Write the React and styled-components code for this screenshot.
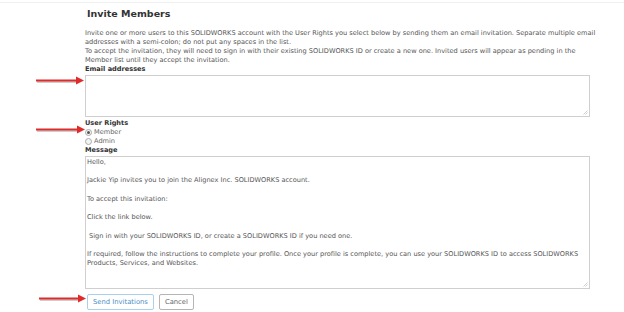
import React from "react";
import styled, { createGlobalStyle } from "styled-components";

const Global = createGlobalStyle`
  html, body {
    margin: 0;
    padding: 0;
    background: #fff;
  }
  body {
    font-family: "DejaVu Sans", Verdana, sans-serif;
    color: #555;
  }
`;

const Page = styled.div`
  position: relative;
  width: 624px;
  height: 312px;
  overflow: hidden;
  border-top: 1px solid #f0f0f0;
  margin-top: 2px;
  box-sizing: border-box;
`;

const Panel = styled.div`
  padding-left: 85px;
  width: 505px;
  display: flex;
  flex-direction: column;
`;

const Title = styled.h2`
  margin: 5px 0 0 2px;
  font-size: 9.5px;
  line-height: 12px;
  font-weight: bold;
  color: #333;
`;

const Intro = styled.p`
  margin: 9px 0 0 0;
  font-size: 6.6px;
  line-height: 9px;
  white-space: nowrap;
`;

const Label = styled.div`
  font-size: 6.6px;
  line-height: 9px;
  font-weight: bold;
  color: #333;
  margin-top: ${(p) => p.$top || 0}px;
`;

const Area = styled.div`
  position: relative;
  box-sizing: border-box;
  width: 505px;
  height: ${(p) => p.$h}px;
  margin-top: 1px;
  border: 1px solid #cfcfcf;
  padding: 1px 1px;
  font-size: 6.6px;
  line-height: 9.2px;
  white-space: pre;
  color: #555;
`;

const Grip = styled.svg`
  position: absolute;
  right: 1px;
  bottom: 1px;
`;

const Option = styled.label`
  display: flex;
  align-items: center;
  gap: 2px;
  font-size: 6.6px;
  line-height: 9px;
  color: #666;
`;

const Radio = styled.span`
  width: 5px;
  height: 5px;
  border-radius: 50%;
  border: 1px solid #aaa;
  background: #f4f4f4;
  display: flex;
  align-items: center;
  justify-content: center;
  &::after {
    content: "";
    width: 3px;
    height: 3px;
    border-radius: 50%;
    background: ${(p) => (p.$checked ? "#555" : "transparent")};
  }
`;

const Actions = styled.div`
  display: flex;
  gap: 5px;
  margin: 5px 0 0 2px;
`;

const Button = styled.button`
  font-family: "DejaVu Sans", Verdana, sans-serif;
  font-size: 6.8px;
  height: 16px;
  padding: 0 5px;
  background: #fff;
  border-radius: 2px;
  border: 1px solid ${(p) => (p.$primary ? "#a9d0ec" : "#b5b5b5")};
  color: ${(p) => (p.$primary ? "#4a8fc6" : "#666")};
`;

const Arrow = styled.svg`
  position: absolute;
  left: ${(p) => p.$x}px;
  top: ${(p) => p.$y}px;
`;

function RedArrow({ x, y, w }) {
  return (
    <Arrow $x={x} $y={y} width={w + 2} height="10" viewBox={`0 0 ${w + 2} 10`}>
      <line x1="1" y1="6" x2={w - 6} y2="6" stroke="#9b9b9b" strokeOpacity="0.5" strokeWidth="2" />
      <line x1="0" y1="4.5" x2={w - 6} y2="4.5" stroke="#e02b2b" strokeWidth="2" />
      <polygon points={`${w - 8},0.5 ${w},4.5 ${w - 8},8.5`} fill="#e02b2b" />
    </Arrow>
  );
}

const message = `Hello,

Jackie Yip invites you to join the Alignex Inc. SOLIDWORKS account.

To accept this invitation:

Click the link below.

 Sign in with your SOLIDWORKS ID, or create a SOLIDWORKS ID if you need one.

If required, follow the instructions to complete your profile. Once your profile is complete, you can use your SOLIDWORKS ID to access SOLIDWORKS
Products, Services, and Websites.`;

function ResizeGrip() {
  return (
    <Grip width="5" height="5" viewBox="0 0 5 5">
      <line x1="0.5" y1="4.5" x2="4.5" y2="0.5" stroke="#bbb" strokeWidth="0.7" />
      <line x1="2.5" y1="4.5" x2="4.5" y2="2.5" stroke="#bbb" strokeWidth="0.7" />
    </Grip>
  );
}

export default function App() {
  return (
    <>
      <Global />
      <Page>
        <Panel>
          <Title>Invite Members</Title>
          <Intro>
            Invite one or more users to this SOLIDWORKS account with the User Rights you select below by sending them an email invitation. Separate multiple email
            <br />
            addresses with a semi-colon; do not put any spaces in the list.
            <br />
            To accept the invitation, they will need to sign in with their existing SOLIDWORKS ID or create a new one. Invited users will appear as pending in the
            <br />
            Member list until they accept the invitation.
          </Intro>
          <Label>Email addresses</Label>
          <Area $h={42}>
            <ResizeGrip />
          </Area>
          <Label $top={2}>User Rights</Label>
          <Option>
            <Radio $checked />
            Member
          </Option>
          <Option>
            <Radio />
            Admin
          </Option>
          <Label>Message</Label>
          <Area $h={133}>
            {message}
            <ResizeGrip />
          </Area>
          <Actions>
            <Button $primary>Send Invitations</Button>
            <Button>Cancel</Button>
          </Actions>
        </Panel>
        <RedArrow x={36} y={73} w={48} />
        <RedArrow x={36} y={122} w={49} />
        <RedArrow x={39} y={291} w={47} />
      </Page>
    </>
  );
}
